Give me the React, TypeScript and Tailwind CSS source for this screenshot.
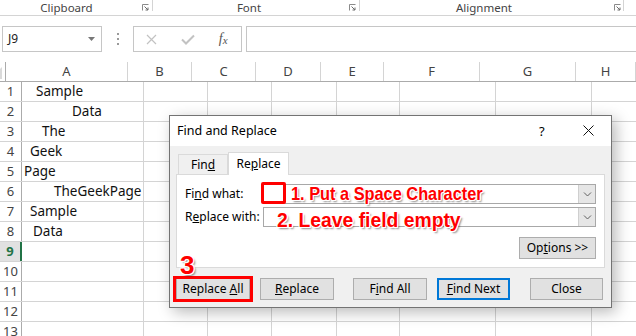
import React from "react";

const cols = [
  { n: "A", w: "w-[122px]" },
  { n: "B", w: "w-[64px]" },
  { n: "C", w: "w-[64px]" },
  { n: "D", w: "w-[65px]" },
  { n: "E", w: "w-[63px]" },
  { n: "F", w: "w-[96px]" },
  { n: "G", w: "w-[96px]" },
  { n: "H", w: "w-[60px]" },
];

const rows: { t: string; pl: string }[] = [
  { t: "Sample", pl: "pl-[14px]" },
  { t: "Data", pl: "pl-[50px]" },
  { t: "The", pl: "pl-[20px]" },
  { t: "Geek", pl: "pl-[8px]" },
  { t: "Page", pl: "pl-[2px]" },
  { t: "TheGeekPage", pl: "pl-[32px]" },
  { t: "Sample", pl: "pl-[8px]" },
  { t: "Data", pl: "pl-[11px]" },
  { t: "", pl: "" },
  { t: "", pl: "" },
  { t: "", pl: "" },
  { t: "", pl: "" },
  { t: "", pl: "" },
];

function Launcher() {
  return (
    <svg width="7" height="7" viewBox="0 0 7 7" className="block">
      <path d="M0.5 6.5V0.5H6.5" fill="none" stroke="#8a8a8a" strokeWidth="1" />
      <path d="M2.5 2.5L6 6M6 3.5V6H3.5" fill="none" stroke="#6a6a6a" strokeWidth="1" />
    </svg>
  );
}

function Chevron() {
  return (
    <svg width="9" height="6" viewBox="0 0 9 6" className="block">
      <path d="M1 1.5L4.5 5L8 1.5" fill="none" stroke="#606060" strokeWidth="1" />
    </svg>
  );
}

function Btn({ children, blue, w }: { children: React.ReactNode; blue?: boolean; w: string }) {
  return (
    <div
      className={
        "h-[22px] flex items-center justify-center bg-[#e1e1e1] text-[12px] text-[#000] " +
        w +
        (blue ? " border-2 border-[#0078d7]" : " border border-[#adadad]")
      }
    >
      <span className="whitespace-pre">{children}</span>
    </div>
  );
}

const redText =
  "text-[#ff0000] font-bold [font-family:'Liberation_Sans',Arial,sans-serif] [text-shadow:1px_0_0_#fff,-1px_0_0_#fff,0_1px_0_#fff,0_-1px_0_#fff,1px_1px_0_#fff,-1px_-1px_0_#fff,1px_-1px_0_#fff,-1px_1px_0_#fff,2px_2px_2px_rgba(0,0,0,0.45)]";

export default function App() {
  return (
    <div className="relative w-[636px] h-[336px] overflow-hidden bg-white [font-family:'Noto_Sans',sans-serif] text-[#222]">
      {/* Ribbon group labels */}
      <div className="h-[16px] flex border-b border-[#d4d4d4] text-[11.5px] leading-[15px] text-[#444]">
        <div className="w-[153px] flex items-start">
          <div className="flex-1 text-center">Clipboard</div>
          <div className="w-[20px] h-[11px] flex items-start pt-[4px] pl-[9px] border-r border-[#d4d4d4]">
            <Launcher />
          </div>
        </div>
        <div className="w-[207px] flex items-start">
          <div className="flex-1 text-center">Font</div>
          <div className="w-[15px] h-[11px] flex items-start pt-[4px] pl-[4px] border-r border-[#d4d4d4]">
            <Launcher />
          </div>
        </div>
        <div className="w-[264px] flex items-start">
          <div className="flex-1 text-center">Alignment</div>
          <div className="w-[16px] h-[11px] flex items-start pt-[4px] pl-[6px] border-r border-[#d4d4d4]">
            <Launcher />
          </div>
        </div>
      </div>

      {/* Formula bar */}
      <div className="mt-[10px] h-[26px] flex">
        <div className="ml-[2px] w-[100px] h-[26px] border border-[#c6c6c6] flex items-center justify-between pl-[5px] pr-[6px] text-[12px] text-[#222]">
          <span>J9</span>
          <svg width="7" height="4" viewBox="0 0 7 4" className="block">
            <path d="M0 0H7L3.5 4Z" fill="#777" />
          </svg>
        </div>
        <div className="w-[31px] flex flex-col items-center justify-center gap-[3px]">
          <div className="w-[2px] h-[2px] bg-[#9a9a9a]" />
          <div className="w-[2px] h-[2px] bg-[#9a9a9a]" />
          <div className="w-[2px] h-[2px] bg-[#9a9a9a]" />
        </div>
        <div className="w-[109px] h-[26px] border border-[#c6c6c6] flex items-center">
          <div className="w-[36px] flex justify-center">
            <svg width="11" height="11" viewBox="0 0 11 11" className="block">
              <path d="M1 1L10 10M10 1L1 10" stroke="#c2c2c2" strokeWidth="1.2" />
            </svg>
          </div>
          <div className="w-[36px] flex justify-center">
            <svg width="14" height="11" viewBox="0 0 14 11" className="block">
              <path d="M1 5.5L5 9.5L13 1.5" fill="none" stroke="#c2c2c2" strokeWidth="2" />
            </svg>
          </div>
          <div className="w-[36px] flex justify-center text-[14px] italic text-[#555] [font-family:'Liberation_Serif',serif] leading-none">
            <span>f</span>
            <span className="text-[11px] mt-[3px]">x</span>
          </div>
        </div>
        <div className="ml-[4px] flex-1 h-[26px] border border-[#c6c6c6] border-r-0" />
      </div>

      {/* Grid */}
      <div className="mt-[10px]">
        <div className="flex h-[20px] border-b border-[#ababab]">
          <div className="w-[22px] border-r border-[#ababab] relative">
            <svg width="12" height="12" viewBox="0 0 12 12" className="absolute right-[3px] bottom-[2px]">
              <path d="M12 0V12H0Z" fill="#dadada" />
            </svg>
          </div>
          {cols.map((c) => (
            <div
              key={c.n}
              className={c.w + " shrink-0 border-r border-[#d4d4d4] flex items-center justify-center text-[13px] text-[#444]"}
            >
              {c.n}
            </div>
          ))}
        </div>
        {rows.map((r, i) => {
          const sel = i === 8;
          return (
            <div key={i} className="flex h-[20px] border-b border-[#d4d4d4]">
              <div
                className={
                  "w-[22px] shrink-0 flex items-center justify-center text-[13px] " +
                  (sel
                    ? "bg-[#e1e1e1] text-[#217346] font-bold border-r-2 border-[#217346]"
                    : "text-[#444] border-r border-[#ababab]")
                }
              >
                {i + 1}
              </div>
              {cols.map((c, j) => (
                <div key={c.n} className={c.w + " shrink-0 border-r border-[#d4d4d4] relative"}>
                  {j === 0 && r.t ? (
                    <span className={"absolute inset-y-0 left-0 flex items-center whitespace-nowrap text-[13.5px] text-[#111] " + r.pl}>
                      {r.t}
                    </span>
                  ) : null}
                </div>
              ))}
            </div>
          );
        })}
      </div>

      {/* Dialog */}
      <div className="absolute left-[169px] top-[115px] w-[443px] h-[193px] border border-[#737373] bg-[#f0f0f0] shadow-[4px_4px_14px_rgba(0,0,0,0.28)] flex flex-col text-[12px] text-black">
        <div className="h-[30px] bg-white flex items-center pl-[7px] relative">
          <span className="text-[12.5px]">Find and Replace</span>
          <span className="absolute left-[369px] top-[7px] text-[13px] leading-[16px]">?</span>
          <svg width="11" height="11" viewBox="0 0 11 11" className="absolute left-[413px] top-[9px]">
            <path d="M0.5 0.5L10.5 10.5M10.5 0.5L0.5 10.5" stroke="#111" strokeWidth="1" />
          </svg>
        </div>
        <div className="px-[6px] pt-[6px] flex flex-col">
          <div className="flex items-end h-[22px] pl-[2px]">
            <div className="w-[50px] h-[20px] border border-b-0 border-[#dadada] bg-[#f0f0f0] flex items-center justify-center">
              <span>
                Fin<span className="underline">d</span>
              </span>
            </div>
            <div className="w-[61px] h-[23px] border border-b-0 border-[#dadada] bg-white flex items-center justify-center -mb-[1px] relative z-10">
              <span>
                Re<span className="underline">p</span>lace
              </span>
            </div>
          </div>
          <div className="h-[94px] border border-[#dadada] bg-white px-[8px] pt-[9px] flex flex-col">
            <div className="flex items-center h-[20px]">
              <div className="w-[78px]">
                Fi<span className="underline">n</span>d what:
              </div>
              <div className="flex-1 h-[20px] border border-[#a8a8a8] flex justify-end">
                <div className="w-[17px] h-full bg-[#e6e6e6] border-l border-[#cfcfcf] flex items-center justify-center">
                  <Chevron />
                </div>
              </div>
            </div>
            <div className="flex items-center h-[20px] mt-[3px]">
              <div className="w-[78px]">
                R<span className="underline">e</span>place with:
              </div>
              <div className="flex-1 h-[20px] border border-[#a8a8a8] flex justify-end">
                <div className="w-[17px] h-full bg-[#e6e6e6] border-l border-[#cfcfcf] flex items-center justify-center">
                  <Chevron />
                </div>
              </div>
            </div>
            <div className="flex justify-end mt-[10px]">
              <Btn w="w-[77px]">
                Op<span className="underline">t</span>ions &gt;&gt;
              </Btn>
            </div>
          </div>
          <div className="flex mt-[10px]">
            <Btn w="w-[74px]">
              {"Replace "}<span className="underline">A</span>ll
            </Btn>
            <div className="w-[10px]" />
            <Btn w="w-[74px]">
              <span className="underline">R</span>eplace
            </Btn>
            <div className="w-[19px]" />
            <Btn w="w-[74px]">
              F<span className="underline">i</span>nd All
            </Btn>
            <div className="w-[10px]" />
            <Btn w="w-[73px]" blue>
              <span className="underline">F</span>ind Next
            </Btn>
            <div className="w-[20px]" />
            <Btn w="w-[73px]">Close</Btn>
          </div>
        </div>
      </div>

      {/* Annotations */}
      <div className="absolute left-[261px] top-[182px] w-[25px] h-[22px] border-[3px] border-[#ff0000] rounded-[2px]" />
      <div className="absolute left-[173px] top-[276px] w-[80px] h-[26px] border-[3px] border-[#ff0000]" />
      <div className={"absolute left-[291px] top-[182px] text-[19px] leading-[24px] whitespace-nowrap origin-left scale-x-[0.86] " + redText}>
        1. Put a Space Character
      </div>
      <div className={"absolute left-[277px] top-[207px] text-[21px] leading-[26px] whitespace-nowrap origin-left scale-x-[0.92] " + redText}>
        2. Leave field empty
      </div>
      <div className={"absolute left-[180px] top-[250px] text-[26px] leading-[30px] " + redText}>3</div>
    </div>
  );
}
